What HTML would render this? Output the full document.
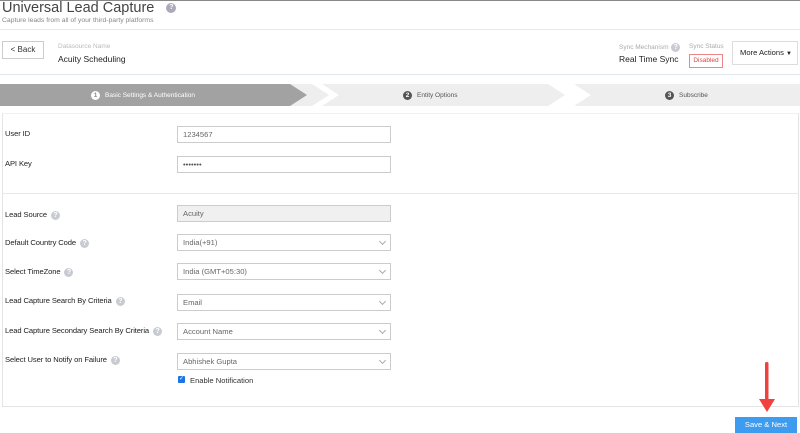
<!DOCTYPE html>
<html><head><style>
*{margin:0;padding:0;box-sizing:border-box}
body{width:800px;height:431px;overflow:hidden;background:#fff;font-family:"Liberation Sans",sans-serif;position:relative;color:#333}
.a{position:absolute}
.q{display:inline-block;width:9px;height:9px;border-radius:50%;background:#c8ccd2;color:#fff;font-size:7px;text-align:center;line-height:9px;font-weight:bold;vertical-align:middle;margin-left:4px}
.lbl{position:absolute;left:5px;font-size:7.6px;color:#222;letter-spacing:-0.1px}
.inp{position:absolute;left:177px;width:214px;height:17px;border:1px solid #ccc;font-size:7.6px;color:#666;padding-left:5px;line-height:15px;background:#fff}
.inp.s::after{content:"";position:absolute;right:5px;top:4px;width:4px;height:4px;border-right:1px solid #aaa;border-bottom:1px solid #aaa;transform:rotate(45deg)}
.n{display:inline-block;width:9px;height:9px;border-radius:50%;background:#fff;color:#888;font-size:6.5px;text-align:center;line-height:9px;font-weight:bold;margin-right:5px;vertical-align:middle}
.step{font-size:6.5px;top:91px}
</style></head><body>
<div class="a" style="left:0;top:0;width:800px;height:1px;background:#888"></div>
<div class="a" style="left:2px;top:0;font-size:14.5px;color:#444">Universal Lead Capture <span class="q" style="width:10px;height:10px;line-height:10px;margin-left:8px;background:#aab">?</span></div>
<div class="a" style="left:2px;top:17px;font-size:6.8px;color:#888">Capture leads from all of your third-party platforms</div>
<div class="a" style="left:0;top:29px;width:800px;height:1px;background:#e8e8e8"></div>
<div class="a" style="left:2px;top:41px;width:42px;height:18px;border:1px solid #ccc;font-size:8px;text-align:center;line-height:16px">&lt; Back</div>
<div class="a" style="left:58px;top:43px;font-size:6.5px;color:#bbb">Datasource Name</div>
<div class="a" style="left:58px;top:54px;font-size:8.5px;color:#222">Acuity Scheduling</div>
<div class="a" style="left:619px;top:43px;font-size:6.5px;color:#aaa">Sync Mechanism <span class="q" style="margin-left:1px">?</span></div>
<div class="a" style="left:619px;top:54px;font-size:8.5px;color:#222">Real Time Sync</div>
<div class="a" style="left:689px;top:43px;font-size:6.5px;color:#aaa">Sync Status</div>
<div class="a" style="left:689px;top:54px;width:34px;height:14px;border:1px solid #e88;font-size:6.5px;color:#d44;text-align:center;line-height:12px">Disabled</div>
<div class="a" style="left:732px;top:41px;width:66px;height:24px;border:1px solid #ddd;font-size:7.6px;color:#222;line-height:22px;padding-left:7px">More Actions <span style="font-size:6px">▼</span></div>
<div class="a" style="left:0;top:74px;width:800px;height:1px;background:#e0e6ee"></div>
<svg class="a" style="left:0;top:84px" width="800" height="22">
<rect x="0" y="0" width="800" height="22" fill="#eeeeee"/>
<polygon points="0,0 290,0 307,11 290,22 0,22" fill="#a2a2a2"/>
<polygon points="312,0 322,0 339,11 322,22 312,22 329,11" fill="#fff"/>
<polygon points="548,0 574,0 591,11 574,22 548,22 565,11" fill="#fff"/>
</svg>
<div class="a step" style="left:91px;color:#fff"><span class="n">1</span>Basic Settings &amp; Authentication</div>
<div class="a step" style="left:403px;color:#555"><span class="n" style="background:#555;color:#fff">2</span>Entity Options</div>
<div class="a step" style="left:665px;color:#555"><span class="n" style="background:#555;color:#fff">3</span>Subscribe</div>
<div class="a" style="left:2px;top:113px;width:797px;height:294px;border:1px solid #e4e4e4;border-top:1px solid #f0f0f0"></div>
<div class="lbl" style="top:129px">User ID</div>
<div class="inp" style="top:126px">1234567</div>
<div class="lbl" style="top:159px">API Key</div>
<div class="inp" style="top:156px;color:#555">•••••••</div>
<div class="a" style="left:2px;top:193px;width:797px;height:1px;background:#e8e8e8"></div>
<div class="lbl" style="top:210px">Lead Source<span class="q">?</span></div>
<div class="inp" style="top:205px;background:#f0f0f0">Acuity</div>
<div class="lbl" style="top:238px">Default Country Code<span class="q">?</span></div>
<div class="inp s" style="top:234px">India(+91)</div>
<div class="lbl" style="top:267px">Select TimeZone<span class="q">?</span></div>
<div class="inp s" style="top:263px">India (GMT+05:30)</div>
<div class="lbl" style="top:296px">Lead Capture Search By Criteria<span class="q">?</span></div>
<div class="inp s" style="top:294px">Email</div>
<div class="lbl" style="top:326px">Lead Capture Secondary Search By Criteria<span class="q">?</span></div>
<div class="inp s" style="top:323px">Account Name</div>
<div class="lbl" style="top:355px">Select User to Notify on Failure<span class="q">?</span></div>
<div class="inp s" style="top:353px">Abhishek Gupta</div>
<div class="a" style="left:178px;top:376px;width:7px;height:7px;background:#1a73e8;border-radius:1px;color:#fff;font-size:6px;line-height:7px;text-align:center">✓</div>
<div class="a" style="left:190px;top:376px;font-size:7.6px;color:#333">Enable Notification</div>
<div class="a" style="left:735px;top:417px;width:62px;height:16px;background:#3d9cf0;color:#fff;font-size:7.6px;text-align:center;line-height:16px">Save &amp; Next</div>
<svg class="a" style="left:757px;top:360px" width="20" height="55"><rect x="8" y="2" width="3.5" height="40" fill="#f04040" rx="1.5"/><polygon points="2,39 18,39 10,52" fill="#f04040"/></svg>
</body></html>
